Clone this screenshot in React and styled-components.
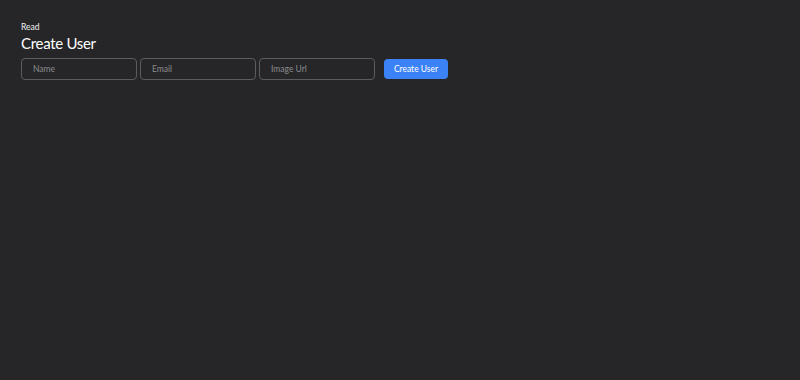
import React from "react";
import styled, { createGlobalStyle } from "styled-components";

const Global = createGlobalStyle`
  html, body { margin: 0; padding: 0; background: #262628; height: 100%; }
  body { font-family: "Lato", "Noto Sans", sans-serif; color: #fff; }
  #root { min-height: 100vh; }
`;

const Page = styled.div`
  padding: 21px 21px;
  display: flex;
  flex-direction: column;
`;

const Label = styled.div`
  font-size: 8.5px;
  line-height: 12px;
  color: #f2f2f2;
`;

const Title = styled.h1`
  margin: 0;
  font-size: 15px;
  font-weight: 400;
  line-height: 20px;
  letter-spacing: -0.3px;
  color: #fff;
`;

const Form = styled.form`
  display: flex;
  align-items: center;
  gap: 3px;
  margin-top: 5px;
`;

const Input = styled.input`
  box-sizing: border-box;
  width: 116px;
  height: 22px;
  background: transparent;
  border: 1px solid #5c5c5e;
  border-radius: 4px;
  padding: 0 11px;
  font-family: inherit;
  font-size: 8.5px;
  color: #fff;
  outline: none;
  &::placeholder { color: #8c8c8e; }
`;

const Button = styled.button`
  box-sizing: border-box;
  margin-left: 6px;
  width: 64px;
  height: 20px;
  padding: 0;
  background: #3b82f6;
  border: none;
  border-radius: 4px;
  color: #fff;
  font-family: inherit;
  font-size: 8.5px;
  cursor: pointer;
`;

export default function App() {
  return (
    <>
      <Global />
      <Page>
        <Label>Read</Label>
        <Title>Create User</Title>
        <Form onSubmit={(e) => e.preventDefault()}>
          <Input placeholder="Name" />
          <Input placeholder="Email" />
          <Input placeholder="Image Url" />
          <Button type="submit">Create User</Button>
        </Form>
      </Page>
    </>
  );
}
